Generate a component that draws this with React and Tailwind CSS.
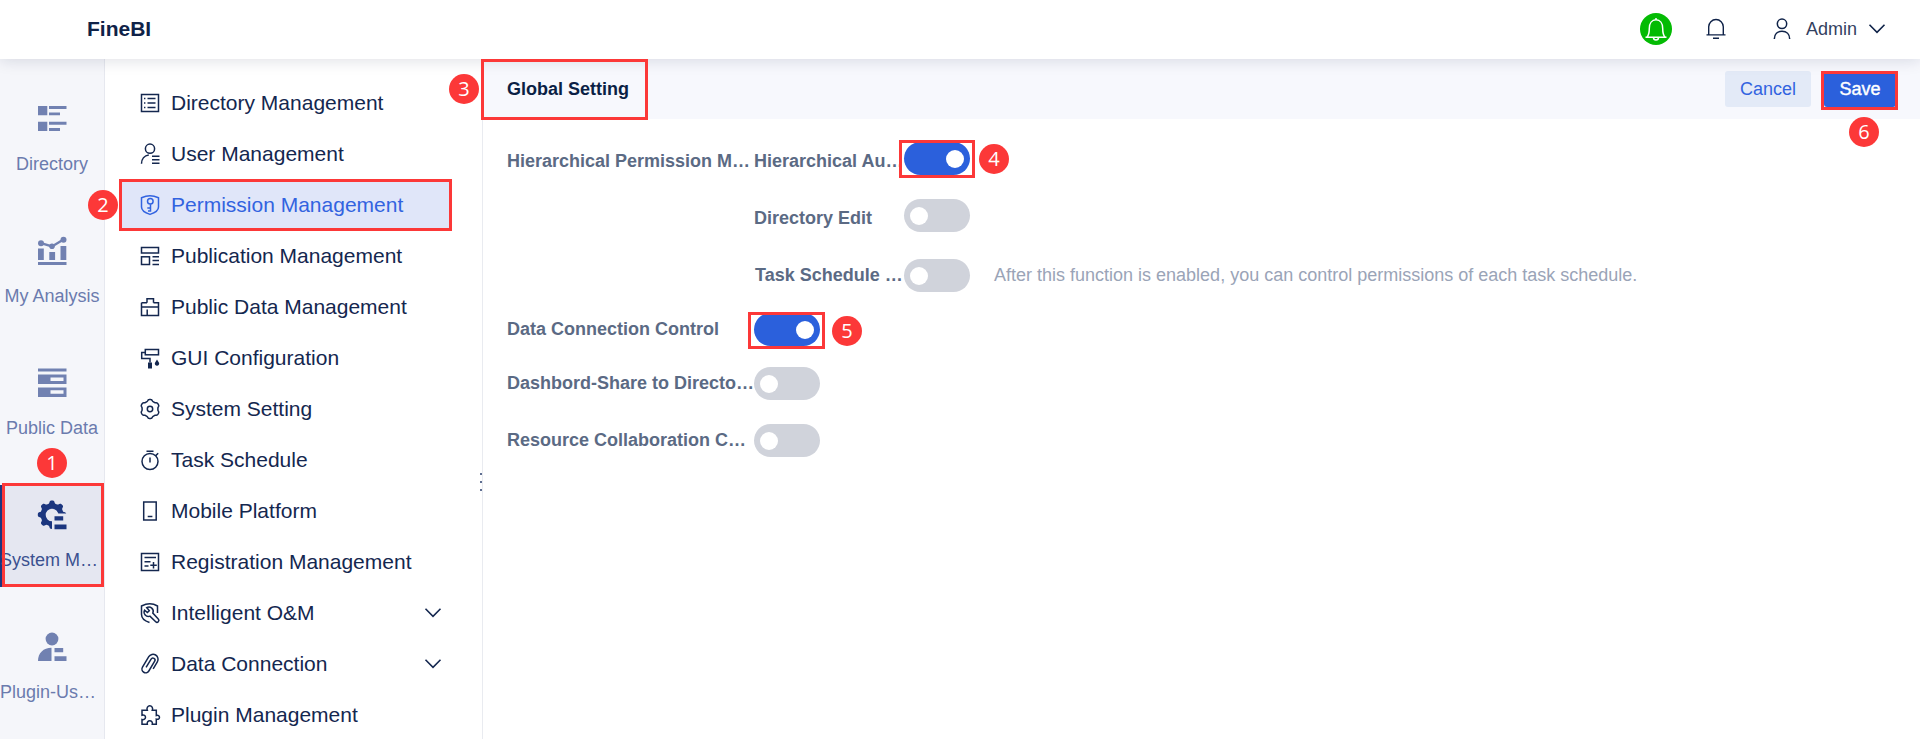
import { useState } from "react";

// Closed outline of a gear whose radius swings between the teeth and the gaps.
function gearPath(cx, cy, radius, depth, teeth, sharpness) {
  const points = [];
  for (let i = 0; i < 240; i++) {
    const angle = (i / 240) * Math.PI * 2 - Math.PI / 2;
    const wave = Math.cos(teeth * (angle + Math.PI / 2));
    const swing = Math.tanh(wave * sharpness) / Math.tanh(sharpness);
    const r = radius + depth * swing;
    points.push(`${(cx + r * Math.cos(angle)).toFixed(2)} ${(cy + r * Math.sin(angle)).toFixed(2)}`);
  }
  return `M${points.join("L")}Z`;
}

const menuIcons = {
  directory: (
    <>
      <rect x="3.5" y="3.5" width="17" height="17" />
      <path d="M9.5 7.5h8M9.5 12h8M9.5 16.5h8M6 7.5h1.4M6 12h1.4M6 16.5h1.4" />
    </>
  ),
  user: (
    <>
      <circle cx="12" cy="6.7" r="4.6" />
      <path d="M3.5 21.8c0-5 3-8.4 7.3-8.9M14 14.3h7.5M14 17.8h7.5M14 21.3h7.5" />
    </>
  ),
  permission: (
    <>
      <path d="M12 2.8c3 0 5.8.8 8.500 2v9.200c0 3.600-4 6-8.500 7.400-4.500-1.400-8.500-3.800-8.500-7.400V4.800c2.700-1.200 5.500-2 8.500-2Z" />
      <circle cx="12.300" cy="8.300" r="2.800" />
      <path d="M12.5 11.2v7.5M12.5 15H9.3M12.5 18H10" />
    </>
  ),
  publication: (
    <>
      <rect x="3.5" y="3.5" width="17" height="5.5" />
      <rect x="3.5" y="12.8" width="8" height="7.7" />
      <path d="M14.5 12.7H21M14.5 16.6H21M14.5 20.5H21" />
    </>
  ),
  publicData: (
    <path d="M9 7.8V3.7h6.5v4.1M3.5 7.8h5.5M15.5 7.8h5v12.7h-17V7.8M3.5 11.9h17M9.2 14.5v5.5" />
  ),
  gui: (
    <>
      <rect x="7.3" y="3.5" width="13.2" height="5.3" />
      <path d="M7.3 6.5H3.7v6H12v4" />
      <path d="M10 16.5h4v6h-4zM19 13.5l2 3.2a2.2 2.2 0 1 1-4 0z" fill="currentColor" stroke="none" />
    </>
  ),
  setting: (
    <>
      <path d={gearPath(12, 12, 8.7, 0.8, 6, 1.6)} />
      <circle cx="12" cy="12" r="2.7" />
    </>
  ),
  schedule: (
    <>
      <circle cx="12" cy="13.5" r="8" />
      <path d="M8.5 3.3h7M12 9.5v5M17.7 7.6l2.5-2.3" />
    </>
  ),
  mobile: (
    <>
      <rect x="5.7" y="3" width="12.5" height="18" />
      <path d="M9.7 17.5h4.7" />
    </>
  ),
  registration: (
    <>
      <rect x="3.5" y="3.5" width="17" height="17" />
      <path d="M6.5 7.5h11.5M6.5 11.7h6M6.5 16h4M12.3 15.3h6.5M15.5 12v6.5" />
    </>
  ),
  intelligent: (
    <>
      <path d="M19.5 12V5c-2.4-1.4-5-2.2-7.7-2.2S6.3 3.6 3.5 5v8.5c0 4 3.5 6.5 8 8" />
      <path d="M8.7 6.6a4.3 4.3 0 0 1 6.1 5.5l5.5 6a1.8 1.8 0 0 1-2.6 2.6l-5.8-5.6a4.3 4.3 0 0 1-5.3-6l2.8 2.4 1.9-1.9z" />
    </>
  ),
  connection: (
    <path
      transform="rotate(31 12 12)"
      d="M17.2 14.5V6.400a5 5 0 0 0-10 0v12.200a3.700 3.700 0 0 0 7.400 0V7.200a2.100 2.100 0 0 0-4.200 0v9.800"
    />
  ),
  plugin: (
    <path d="M4 7.3h5.3c-1-2.500.6-4.500 2.500-4.500s3.500 2 2.500 4.500h4v5.200c1.700-.7 3.200.3 3.200 1.800s-1.500 2.500-3.200 1.800v5.100h-4c.5-2-.8-3.400-2.500-3.400s-3 1.400-2.500 3.400H4v-4.700c2 .5 3.500-.6 3.500-2.200S6 11.600 4 12.200z" />
  ),
};

const railIcons = {
  directory: (
    <path d="M0 1h9.3v9.3H0zM11 1h17.5v3H11zM11 7.5h11v2.8H11zM0 16.7h9.3V26H0zM11 16.7h17.5v3H11zM11 23h11v3H11z" />
  ),
  analysis: (
    <>
      <path d="M0 11.500h5.800v11.500H0zM11.300 15h5.800v8h-5.800zM22.500 9h5.800v14h-5.800zM0 25h28.500v3H0z" />
      <path d="M3 6.200l11 3.300L25.500 2.500" fill="none" stroke="currentColor" strokeWidth="2.400" />
      <circle cx="3" cy="6.2" r="3" />
      <circle cx="14" cy="9.3" r="2.800" />
      <circle cx="25.500" cy="2.700" r="3" />
    </>
  ),
  data: (
    <path
      fillRule="evenodd"
      d="M0-.5h28.500v3H0zM0 5.500h28.500V15H0zM12.500 8.500v3.500h13V8.500zM0 18.500h28.500V28H0zM12.500 21.300v3.500h13v-3.500z"
    />
  ),
  system: (
    <>
      <clipPath id="gear-cut">
        <path d="M-1-1h31v13.500H14V30H-1z" />
      </clipPath>
      <path
        clipPath="url(#gear-cut)"
        fillRule="evenodd"
        d={`${gearPath(14, 13.7, 12.8, 1.4, 8, 2)}M7.700 14a6.300 6.300 0 1 0 12.600 0a6.300 6.300 0 1 0-12.600 0Z`}
      />
      <path d="M16.500 15.200h8.700v4.300h-8.700zM16.500 23.500h12v4.700h-12z" />
    </>
  ),
  plugin: (
    <>
      <circle cx="14" cy="6" r="6.4" />
      <path d="M13.500 14.700V28H0c0-8 5.500-13.300 13.500-13.300zM16.500 15h8.700v4.200h-8.700zM16.500 23.300h12V28h-12z" />
    </>
  ),
};

const railItems = [
  { label: "Directory", icon: "directory" },
  { label: "My Analysis", icon: "analysis" },
  { label: "Public Data", icon: "data" },
  { label: "System M…", icon: "system", cut: true },
  { label: "Plugin-Us…", icon: "plugin", cut: true },
];

const menuItems = [
  { label: "Directory Management", icon: "directory" },
  { label: "User Management", icon: "user" },
  { label: "Permission Management", icon: "permission" },
  { label: "Publication Management", icon: "publication" },
  { label: "Public Data Management", icon: "publicData" },
  { label: "GUI Configuration", icon: "gui" },
  { label: "System Setting", icon: "setting" },
  { label: "Task Schedule", icon: "schedule" },
  { label: "Mobile Platform", icon: "mobile" },
  { label: "Registration Management", icon: "registration" },
  { label: "Intelligent O&M", icon: "intelligent", expandable: true },
  { label: "Data Connection", icon: "connection", expandable: true },
  { label: "Plugin Management", icon: "plugin" },
];

const steps = [
  { number: 1, box: "left-[2px] top-[483px] h-[104px] w-[102px]", badge: "left-[37px] top-[448px]" },
  { number: 2, box: "left-[119px] top-[179px] h-[52px] w-[333px]", badge: "left-[88px] top-[190px]" },
  { number: 3, box: "left-[481px] top-[59px] h-[61px] w-[167px]", badge: "left-[449px] top-[74px]" },
  { number: 4, box: "left-[899px] top-[140px] h-[38px] w-[76px]", badge: "left-[979px] top-[144px]" },
  { number: 5, box: "left-[748px] top-[312px] h-[37px] w-[77px]", badge: "left-[832px] top-[316px]" },
  { number: 6, box: "left-[1821px] top-[71px] h-[39px] w-[77px]", badge: "left-[1849px] top-[117px]" },
];

function Chevron() {
  return (
    <svg width="18" height="12" viewBox="0 0 18 12" fill="none" stroke="currentColor" strokeWidth="1.6">
      <path d="M1.5 1.8 9 9.3l7.5-7.5" />
    </svg>
  );
}

function Header() {
  return (
    <header className="relative z-10 flex h-[59px] shrink-0 items-center bg-white pb-px pl-[87px] pr-[34px] text-[#0f2248] shadow-[0_2px_14px_rgba(15,25,60,0.13)]">
      <h1 className="text-[21px] font-bold leading-6">FineBI</h1>
      <div className="ml-auto flex items-center">
        <span className="flex size-8 items-center justify-center rounded-full bg-[#04bb04] text-white">
          <svg width="24" height="24" viewBox="0 0 24 24" fill="none" stroke="currentColor" strokeWidth="1.5">
            <path d="M12 2.8V1M1.5 20.3h21M3 20c2-2 2.3-4.5 2.3-8.5 0-5.3 2.7-8.7 6.7-8.7s6.7 3.4 6.7 8.7c0 4 .3 6.500 2.300 8.500M9.500 20.500a2.500 2.500 0 0 0 5 0" />
          </svg>
        </span>
        <svg className="ml-8" width="24" height="24" viewBox="0 0 24 24" fill="none" stroke="currentColor" strokeWidth="1.4">
          <path d="M2.5 17.9h19M4.7 17.9V9.8a7.3 7.3 0 0 1 14.6 0v8.1M9 21.3h6" />
        </svg>
        <svg className="ml-[42px]" width="24" height="24" viewBox="0 0 24 24" fill="none" stroke="currentColor" strokeWidth="1.5">
          <circle cx="12" cy="6.8" r="4.7" />
          <path d="M4.3 22c0-5 3.2-7.7 7.7-7.7s7.7 2.7 7.7 7.7" />
        </svg>
        <span className="ml-3 mr-[11px] text-lg leading-6 text-[#33415f]">Admin</span>
        <Chevron />
      </div>
    </header>
  );
}

function Rail() {
  return (
    <nav className="flex w-[105px] shrink-0 flex-col gap-[30px] border-r border-[#e6e8ef] bg-[#f5f6fa] pt-[30px]">
      {railItems.map((item) => {
        const active = item.icon === "system";
        return (
          <a
            key={item.label}
            className={`flex h-[102px] shrink-0 flex-col items-center pt-4 ${
              active ? "bg-[#e5e7f1] text-[#1b367f] shadow-[inset_2px_0_0_#1b367f]" : "text-[#7181b1]"
            }`}
          >
            <svg className="h-7 w-[29px] shrink-0 overflow-visible" viewBox="0 0 29 28" fill="currentColor">
              {railIcons[item.icon]}
            </svg>
            <span
              className={`mt-[19px] w-full whitespace-nowrap text-lg leading-6 ${item.cut ? "text-left" : "text-center"} ${
                active ? "text-[#3b5190]" : "text-[#6b7bae]"
              }`}
            >
              {item.label}
            </span>
          </a>
        );
      })}
    </nav>
  );
}

function Menu({ selected, onSelect }) {
  return (
    <aside className="flex w-[378px] shrink-0 items-center border-r border-[#e9ebf0] bg-white">
      <ul className="w-[375px] self-start pt-[18px]">
        {menuItems.map((item) => (
          <li key={item.label} className="flex h-[51px] items-center pl-[15px] pr-[30px]">
            <button
              type="button"
              onClick={() => onSelect(item.label)}
              className={`flex h-12 w-full items-center pl-[18px] pr-2 text-[21px] leading-7 ${
                selected === item.label ? "bg-[#e0e6f9] text-[#3263e0]" : "text-[#14274f]"
              }`}
            >
              <svg width="24" height="24" viewBox="0 0 24 24" fill="none" stroke="currentColor" strokeWidth="1.5">
                {menuIcons[item.icon]}
              </svg>
              <span className="ml-[9px] whitespace-nowrap">{item.label}</span>
              {item.expandable ? (
                <span className="ml-auto">
                  <Chevron />
                </span>
              ) : null}
            </button>
          </li>
        ))}
      </ul>
      <div className="mt-[165px] flex flex-col gap-1.5">
        <i className="size-[2px] bg-[#5f6f92]" />
        <i className="size-[2px] bg-[#5f6f92]" />
        <i className="size-[2px] bg-[#5f6f92]" />
      </div>
    </aside>
  );
}

function Toggle({ defaultOn = false }) {
  const [on, setOn] = useState(defaultOn);
  return (
    <button
      type="button"
      role="switch"
      aria-checked={on}
      onClick={() => setOn(!on)}
      className={`flex h-[33px] w-[66px] shrink-0 items-center rounded-full px-1.5 ${
        on ? "justify-end bg-[#2b60dc]" : "justify-start bg-[#d0d3db]"
      }`}
    >
      <span className="size-[18px] rounded-full bg-white" />
    </button>
  );
}

function Label({ className, children }) {
  return <span className={`shrink-0 whitespace-nowrap text-lg font-bold leading-6 text-[#5b6a84] ${className}`}>{children}</span>;
}

function Settings() {
  return (
    <div className="flex flex-col pl-6">
      <div className="mt-[23px] flex">
        <Label className="mt-[7px] w-[247px]">Hierarchical Permission M…</Label>
        <div className="flex flex-col">
          <div className="flex">
            <Label className="mt-[7px] w-[150px]">Hierarchical Au…</Label>
            <Toggle defaultOn />
          </div>
          <div className="mt-6 flex">
            <Label className="mt-[7px] w-[150px]">Directory Edit</Label>
            <Toggle />
          </div>
          <div className="mt-[27px] flex">
            <Label className="mt-1 w-[150px] pl-px">Task Schedule …</Label>
            <Toggle />
            <p className="ml-6 mt-1 whitespace-nowrap text-lg leading-6 text-[#9aa4b7]">
              After this function is enabled, you can control permissions of each task schedule.
            </p>
          </div>
        </div>
      </div>
      <div className="mt-[21px] flex">
        <Label className="mt-1 w-[247px]">Data Connection Control</Label>
        <Toggle defaultOn />
      </div>
      <div className="mt-[21px] flex">
        <Label className="mt-1 w-[247px]">Dashbord-Share to Directo…</Label>
        <Toggle />
      </div>
      <div className="mt-6 flex">
        <Label className="mt-1 w-[247px]">Resource Collaboration C…</Label>
        <Toggle />
      </div>
    </div>
  );
}

function Step({ step }) {
  return (
    <>
      <div className={`pointer-events-none absolute z-20 border-3 border-[#fc3838] ${step.box}`} />
      <div
        className={`absolute z-20 flex size-[30px] items-center justify-center rounded-full bg-[#fc3838] pb-px font-['Open_Sans','Noto_Sans',sans-serif] text-[20px] leading-none text-white ${step.badge}`}
      >
        {step.number}
      </div>
    </>
  );
}

export default function App() {
  const [selected, setSelected] = useState("Permission Management");

  return (
    <div className="relative flex h-[739px] w-[1920px] flex-col overflow-hidden bg-white font-['Liberation_Sans',Arial,sans-serif]">
      <Header />
      <div className="flex min-h-0 flex-1">
        <Rail />
        <Menu selected={selected} onSelect={setSelected} />
        <main className="flex-1 bg-white">
          <div className="flex h-[60px] items-center bg-[#f7f8fd] px-6">
            <h2 className="text-lg font-bold leading-6 text-[#0b1f45]">Global Setting</h2>
            <button type="button" className="ml-auto h-9 w-[86px] rounded-[3px] bg-[#e3eaf7] text-lg leading-6 text-[#3263e0]">
              Cancel
            </button>
            <button
              type="button"
              className="ml-[13px] h-9 w-[72px] rounded-[3px] bg-[#2b60dc] text-lg leading-6 text-white [-webkit-text-stroke:0.4px_white]"
            >
              Save
            </button>
          </div>
          <Settings />
        </main>
      </div>
      {steps.map((step) => (
        <Step key={step.number} step={step} />
      ))}
    </div>
  );
}
